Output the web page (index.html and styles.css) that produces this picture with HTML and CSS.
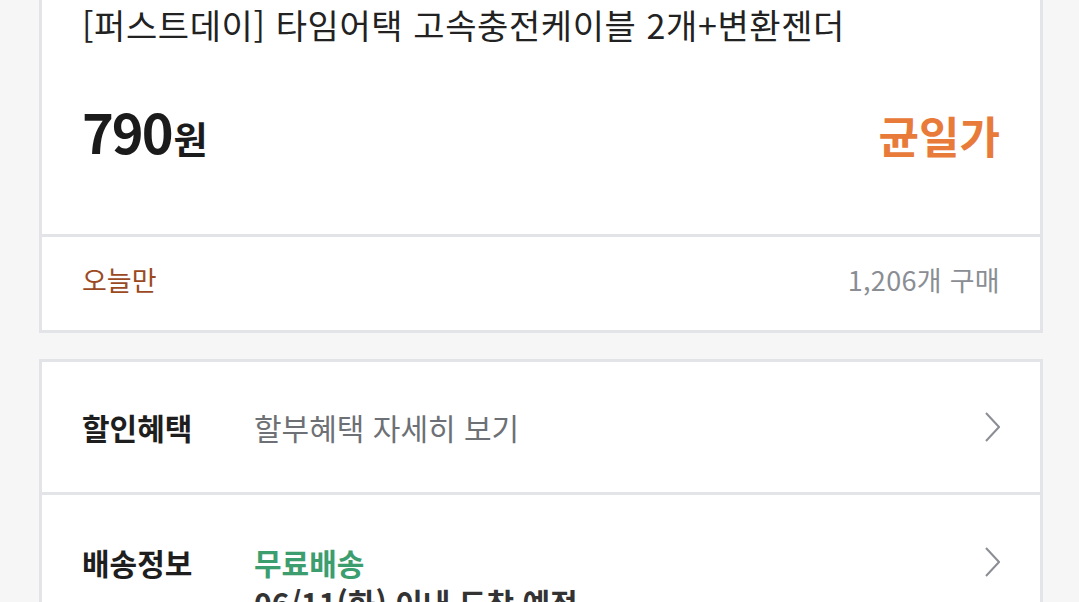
FILE: index.html
```html
<!DOCTYPE html>
<html lang="ko">
<head>
<meta charset="utf-8">
<link rel="stylesheet" href="styles.css">
<title>상품 상세</title>
</head>
<body>
<div class="page">
  <section class="card card-product">
    <div class="product-main">
      <h1 class="title">[퍼스트데이] 타임어택 고속충전케이블 2개+변환젠더</h1>
      <div class="price-row">
        <div class="price"><span class="num">790</span><span class="won">원</span></div>
        <div class="tag">균일가</div>
      </div>
    </div>
    <div class="product-foot">
      <span class="today">오늘만</span>
      <span class="sold">1,206개 구매</span>
    </div>
  </section>

  <section class="card card-info">
    <div class="info-row row-benefit">
      <div class="label">할인혜택</div>
      <div class="value"><span class="muted">할부혜택 자세히 보기</span></div>
      <svg class="chev" viewBox="0 0 16 32" width="16" height="32"><polyline points="2,2 15,16 2,30" fill="none" stroke="#8b8e94" stroke-width="2"/></svg>
    </div>
    <div class="info-row row-ship">
      <div class="label">배송정보</div>
      <div class="value">
        <div class="free">무료배송</div>
        <div class="eta">06/11(화) 이내 도착 예정</div>
      </div>
      <svg class="chev" viewBox="0 0 16 32" width="16" height="32"><polyline points="2,2 15,16 2,30" fill="none" stroke="#8b8e94" stroke-width="2"/></svg>
    </div>
  </section>
</div>
</body>
</html>
```
FILE: styles.css
```css
html, body {
  margin: 0;
  padding: 0;
  background: #f6f6f7;
  font-family: "Noto Sans CJK KR", "Noto Sans", sans-serif;
  overflow: hidden;
}
.page {
  padding: 0 36px 0 39px;
  margin-top: -40px;
  display: flex;
  flex-direction: column;
  gap: 26px;
}
.card {
  background: #fff;
  border: 3px solid #e2e4e8;
}
.product-main {
  padding: 38px 40px 0 40px;
  height: 271px;
  box-sizing: border-box;
}
.title {
  margin: 0;
  font-size: 34px;
  font-weight: 400;
  color: #222;
  line-height: 48px;
  letter-spacing: 0.6px;
}
.price-row {
  display: flex;
  justify-content: space-between;
  align-items: baseline;
  margin-top: 42px;
}
.price {
  color: #1b1b1b;
  font-weight: 700;
}
.price .num {
  font-size: 54px;
  letter-spacing: -2px;
}
.price .won {
  font-size: 37px;
  margin-left: 2px;
}
.tag {
  font-size: 44px;
  font-weight: 700;
  color: #e87b3a;
}
.product-foot {
  border-top: 3px solid #e2e4e8;
  height: 96px;
  box-sizing: border-box;
  padding: 0 40px 8px 40px;
  display: flex;
  justify-content: space-between;
  align-items: center;
  font-size: 27px;
}
.today { color: #9b4a1f; }
.sold { color: #8a8e94; letter-spacing: 0.3px; }
.info-row {
  display: flex;
  padding: 0 40px;
  font-size: 30px;
  line-height: 40px;
}
.row-benefit {
  height: 130px;
  align-items: center;
  border-bottom: 3px solid #e2e4e8;
}
.row-ship {
  padding-top: 47px;
  height: 200px;
  align-items: flex-start;
}
.label {
  width: 172px;
  flex: none;
  font-weight: 700;
  color: #1e1e1e;
}
.value { flex: 1; }
.muted { color: #6d7075; }
.free { color: #3c9e6e; font-weight: 700; }
.eta { color: #333; font-weight: 700; }
.chev { flex: none; }
.row-ship .chev { margin-top: 4px; }
```
